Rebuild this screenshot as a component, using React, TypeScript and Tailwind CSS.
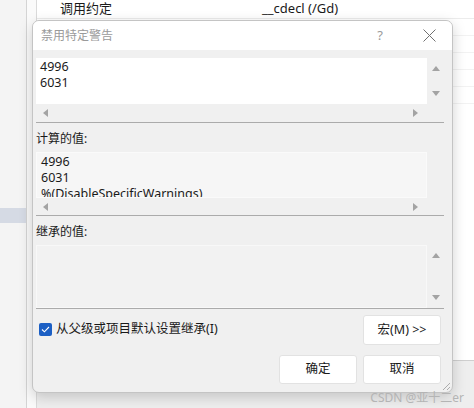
import React from 'react';

const font = { fontFamily: '"Noto Sans", "Noto Sans CJK SC", sans-serif' };

function Tri({ dir }: { dir: 'up' | 'down' | 'left' | 'right' }) {
  const pts = {
    up: '0,5 4,0 8,5',
    down: '0,0 8,0 4,5',
    left: '5,0 5,8 0,4',
    right: '0,0 0,8 5,4',
  }[dir];
  const vertical = dir === 'up' || dir === 'down';
  return (
    <svg width={vertical ? 8 : 5} height={vertical ? 5 : 8} viewBox={vertical ? '0 0 8 5' : '0 0 5 8'}>
      <polygon points={pts} fill="#a3a3a3" />
    </svg>
  );
}

function VScroll() {
  return (
    <div className="flex w-[17px] flex-col items-center justify-between py-[8px]">
      <Tri dir="up" />
      <Tri dir="down" />
    </div>
  );
}

function HScroll() {
  return (
    <div className="flex h-[17px] w-[391px] items-center justify-between pl-[7px] pr-[9px]">
      <Tri dir="left" />
      <Tri dir="right" />
    </div>
  );
}

function Lines({ items }: { items: string[] }) {
  return (
    <div className="pl-[4px] pt-[1px] text-[12.5px] leading-[16px] text-[#1a1a1a]">
      {items.map((t) => (
        <div key={t}>{t}</div>
      ))}
    </div>
  );
}

function Sep() {
  return <div className="h-px w-[408px] bg-[#ababab]" />;
}

function Dialog() {
  return (
    <div
      className="absolute left-[32px] top-[20px] flex h-[373px] w-[421px] flex-col overflow-hidden rounded-[7px] border border-[#c4c4c4] bg-[#f0f0f0] shadow-[0_4px_14px_rgba(0,0,0,0.18)]"
      style={font}
    >
      <div className="flex h-[29px] items-center bg-white pl-[8px] text-[12px] text-[#9a9a9a]">
        <span>禁用特定警告</span>
        <span className="ml-auto mr-[40px] text-[13px]">?</span>
        <svg width="13" height="13" viewBox="0 0 13 13" className="mr-[16px]">
          <path d="M0.5 0.5 L12.5 12.5 M12.5 0.5 L0.5 12.5" stroke="#707070" strokeWidth="1" />
        </svg>
      </div>

      <div className="flex flex-col pl-[3px] pt-[8px]">
        <div className="flex h-[63px] w-[408px] flex-col">
          <div className="flex h-[46px]">
            <div className="h-[46px] w-[391px] bg-white">
              <Lines items={['4996', '6031']} />
            </div>
            <VScroll />
          </div>
          <HScroll />
        </div>
        <div className="mt-px">
          <Sep />
        </div>

        <div className="h-[29px] pt-[6px] text-[12px] leading-[20px] text-[#1a1a1a]">计算的值:</div>
        <div className="flex h-[63px] w-[408px] flex-col">
          <div className="flex h-[46px]">
            <div className="h-[46px] w-[391px] overflow-hidden border border-[#fafafa] bg-[#f6f6f6]">
              <Lines items={['4996', '6031', '%(DisableSpecificWarnings)']} />
            </div>
            <div className="w-[17px]" />
          </div>
          <HScroll />
        </div>
        <Sep />

        <div className="h-[29px] pt-[6px] text-[12px] leading-[20px] text-[#1a1a1a]">继承的值:</div>
        <div className="flex h-[63px] w-[408px]">
          <div className="h-[63px] w-[391px] border border-[#f8f8f8] bg-[#f2f2f2]" />
          <VScroll />
        </div>
        <Sep />

        <div className="mt-[6px] flex w-[408px] items-start justify-between">
          <label className="mt-[4px] flex items-center gap-[4px] pl-[3px] text-[12px] leading-[20px] text-[#1a1a1a]">
            <span className="flex h-[13px] w-[13px] items-center justify-center rounded-[2px] bg-[#1c5fc4]">
              <svg width="9" height="7" viewBox="0 0 9 7">
                <path d="M1 3.5 L3.4 5.8 L8 1" stroke="white" strokeWidth="1.1" fill="none" />
              </svg>
            </span>
            <span className="text-[12.5px]">从父级或项目默认设置继承(I)</span>
          </label>
          <button className="mr-[3px] h-[30px] w-[78px] rounded-[3px] border border-[#e2e2e2] bg-white text-[12.5px] text-[#1a1a1a]">
            宏(M) &gt;&gt;
          </button>
        </div>

        <div className="mt-[10px] flex w-[408px] justify-end gap-[6px] pr-[3px]">
          <button className="h-[29px] w-[78px] rounded-[3px] border border-[#e2e2e2] bg-white text-[12.5px] text-[#1a1a1a]">
            确定
          </button>
          <button className="h-[29px] w-[78px] rounded-[3px] border border-[#e2e2e2] bg-white text-[12.5px] text-[#1a1a1a]">
            取消
          </button>
        </div>
      </div>

      <svg width="9" height="9" viewBox="0 0 9 9" className="absolute bottom-[1px] right-[1px]">
        <path d="M8 1 L1 8 M8 5 L5 8" stroke="#9a9a9a" strokeWidth="0.8" />
      </svg>
    </div>
  );
}

export default function App() {
  return (
    <div className="relative h-[408px] w-[474px] overflow-hidden bg-white" style={font}>
      <div className="flex h-full">
        {/* left tree strip */}
        <div className="flex w-[27px] flex-col border-r border-[#d4d4d4] bg-[#f4f4f4]">
          <div className="mt-[208px] h-[15px] bg-[#d5dae4]" />
        </div>
        <div className="w-[10px] border-r border-[#dadada] bg-[#fafafa]" />
        {/* property grid */}
        <div className="flex flex-1 flex-col">
          <div className="flex h-[19px] items-center border-b border-[#ececec] text-[13px] text-[#1a1a1a]">
            <span className="ml-[23px]">调用约定</span>
            <span className="ml-[150px]">__cdecl (/Gd)</span>
          </div>
          <div className="h-[17px] border-b border-[#f2f2f2]" />
          <div className="h-[17px] border-b border-[#f2f2f2]" />
          <div className="h-[17px] border-b border-[#f2f2f2]" />
          <div className="h-[17px] border-b border-[#f2f2f2]" />
          <div className="h-[17px] border-b border-[#f2f2f2]" />
          <div className="flex-1" />
          <div className="h-[48px] border-t border-[#cfcfcf] bg-[#eeeeee]" />
        </div>
      </div>

      <Dialog />

      <div className="absolute bottom-[1px] right-[10px] text-[12px] text-[#b4b4b4]">CSDN @亚十二er</div>
    </div>
  );
}
